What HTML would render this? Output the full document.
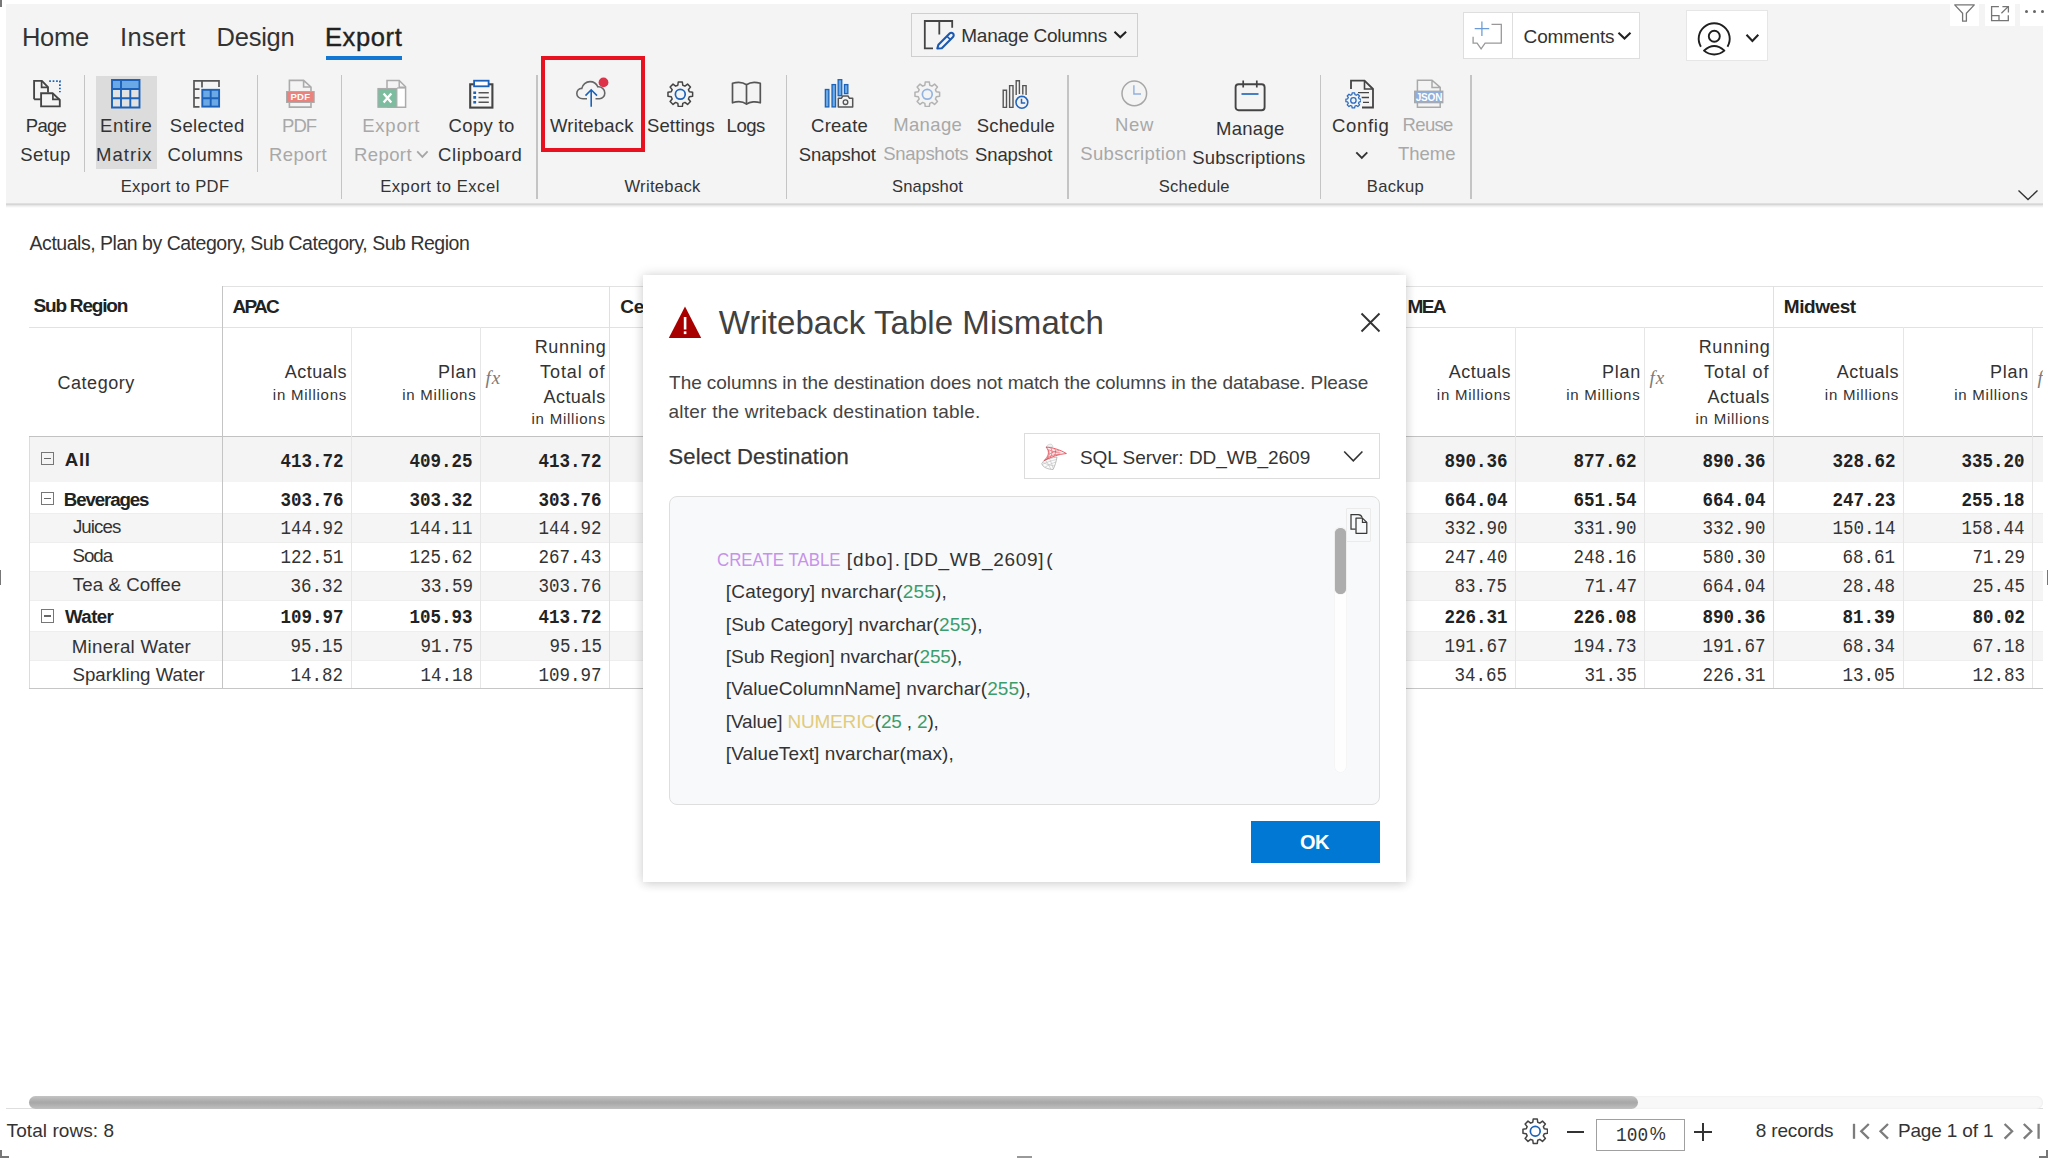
<!DOCTYPE html>
<html><head><meta charset="utf-8"><title>Writeback Table Mismatch</title>
<style>
html,body{margin:0;padding:0;background:#fff;}
body{width:2048px;height:1158px;position:relative;overflow:hidden;font-family:"Liberation Sans",sans-serif;}
.t{position:absolute;white-space:pre;}
.r{position:absolute;}
</style></head><body>
<div class="r" style="left:6.4px;top:4px;width:2036.6px;height:199.4px;background:#f4f4f4;"></div>
<div class="r" style="left:6.4px;top:203.2px;width:2036.6px;height:4.6px;background:linear-gradient(rgba(0,0,0,.07),rgba(0,0,0,.19) 22%,rgba(0,0,0,.08) 55%,rgba(0,0,0,0));"></div>
<div class="r" style="left:1949.8px;top:0px;width:29.5px;height:25.7px;background:#fff;"></div>
<div class="r" style="left:1984.8px;top:0px;width:29.8px;height:25.7px;background:#fff;"></div>
<div class="r" style="left:2019.6px;top:0px;width:28.4px;height:25.7px;background:#fff;"></div>
<div class="t" style="left:21.92px;top:25.13px;font-size:25.5px;line-height:25.5px;color:#333333;letter-spacing:-0.284px;">Home</div>
<div class="t" style="left:119.97px;top:25.13px;font-size:25.5px;line-height:25.5px;color:#333333;letter-spacing:0.340px;">Insert</div>
<div class="t" style="left:216.62px;top:25.13px;font-size:25.5px;line-height:25.5px;color:#333333;letter-spacing:-0.253px;">Design</div>
<div class="t" style="left:324.92px;top:25.13px;font-size:25.5px;line-height:25.5px;color:#222;letter-spacing:0.625px;-webkit-text-stroke:0.4px #222;">Export</div>
<div class="r" style="left:326px;top:56px;width:76px;height:4px;background:#1177d3;"></div>
<div class="r" style="left:83.7px;top:75px;width:1.4px;height:97px;background:#c4c4c4;"></div>
<div class="r" style="left:257.0px;top:75px;width:1.4px;height:97px;background:#c4c4c4;"></div>
<div class="r" style="left:340.90000000000003px;top:75px;width:1.4px;height:124px;background:#c4c4c4;"></div>
<div class="r" style="left:536.1999999999999px;top:75px;width:1.4px;height:124px;background:#c4c4c4;"></div>
<div class="r" style="left:785.9px;top:75px;width:1.4px;height:124px;background:#c4c4c4;"></div>
<div class="r" style="left:1067.3999999999999px;top:75px;width:1.4px;height:124px;background:#c4c4c4;"></div>
<div class="r" style="left:1319.6px;top:75px;width:1.4px;height:124px;background:#c4c4c4;"></div>
<div class="r" style="left:1470.3px;top:75px;width:1.4px;height:124px;background:#c4c4c4;"></div>
<div class="r" style="left:95.5px;top:75.5px;width:61.5px;height:93px;background:#dcdcdc;"></div>
<div class="t" style="left:25.79px;top:116.57px;font-size:18.5px;line-height:18.5px;color:#333333;letter-spacing:-0.728px;">Page</div>
<div class="t" style="left:20.23px;top:145.57px;font-size:18.5px;line-height:18.5px;color:#333333;letter-spacing:0.402px;">Setup</div>
<div class="t" style="left:100.09px;top:116.57px;font-size:18.5px;line-height:18.5px;color:#333333;letter-spacing:0.676px;">Entire</div>
<div class="t" style="left:96.09px;top:145.57px;font-size:18.5px;line-height:18.5px;color:#333333;letter-spacing:1.036px;">Matrix</div>
<div class="t" style="left:169.73px;top:116.57px;font-size:18.5px;line-height:18.5px;color:#333333;letter-spacing:0.355px;">Selected</div>
<div class="t" style="left:167.60px;top:145.57px;font-size:18.5px;line-height:18.5px;color:#333333;letter-spacing:0.345px;">Columns</div>
<div class="t" style="left:282.09px;top:116.57px;font-size:18.5px;line-height:18.5px;color:#a8a8a8;letter-spacing:-0.972px;">PDF</div>
<div class="t" style="left:269.09px;top:145.57px;font-size:18.5px;line-height:18.5px;color:#a8a8a8;letter-spacing:0.408px;">Report</div>
<div class="t" style="left:362.29px;top:116.57px;font-size:18.5px;line-height:18.5px;color:#a8a8a8;letter-spacing:0.739px;">Export</div>
<div class="t" style="left:354.09px;top:145.57px;font-size:18.5px;line-height:18.5px;color:#a8a8a8;letter-spacing:0.388px;">Report</div>
<div class="t" style="left:448.60px;top:116.57px;font-size:18.5px;line-height:18.5px;color:#333333;letter-spacing:0.337px;">Copy to</div>
<div class="t" style="left:438.10px;top:145.57px;font-size:18.5px;line-height:18.5px;color:#333333;letter-spacing:0.577px;">Clipboard</div>
<div class="t" style="left:550.00px;top:116.57px;font-size:18.5px;line-height:18.5px;color:#333333;letter-spacing:0.188px;">Writeback</div>
<div class="t" style="left:647.03px;top:116.57px;font-size:18.5px;line-height:18.5px;color:#333333;letter-spacing:0.115px;">Settings</div>
<div class="t" style="left:726.59px;top:116.57px;font-size:18.5px;line-height:18.5px;color:#333333;letter-spacing:-0.443px;">Logs</div>
<div class="t" style="left:811.10px;top:117.07px;font-size:18.5px;line-height:18.5px;color:#333333;letter-spacing:0.234px;">Create</div>
<div class="t" style="left:798.83px;top:146.07px;font-size:18.5px;line-height:18.5px;color:#333333;letter-spacing:-0.163px;">Snapshot</div>
<div class="t" style="left:893.19px;top:116.07px;font-size:18.5px;line-height:18.5px;color:#a8a8a8;letter-spacing:0.356px;">Manage</div>
<div class="t" style="left:883.23px;top:145.07px;font-size:18.5px;line-height:18.5px;color:#a8a8a8;letter-spacing:-0.260px;">Snapshots</div>
<div class="t" style="left:976.83px;top:117.07px;font-size:18.5px;line-height:18.5px;color:#333333;letter-spacing:0.123px;">Schedule</div>
<div class="t" style="left:975.03px;top:146.07px;font-size:18.5px;line-height:18.5px;color:#333333;letter-spacing:-0.120px;">Snapshot</div>
<div class="t" style="left:1114.99px;top:116.28px;font-size:18.5px;line-height:18.5px;color:#a8a8a8;letter-spacing:0.642px;">New</div>
<div class="t" style="left:1080.23px;top:145.38px;font-size:18.5px;line-height:18.5px;color:#a8a8a8;letter-spacing:0.380px;">Subscription</div>
<div class="t" style="left:1216.09px;top:119.57px;font-size:18.5px;line-height:18.5px;color:#333333;letter-spacing:0.256px;">Manage</div>
<div class="t" style="left:1192.23px;top:148.57px;font-size:18.5px;line-height:18.5px;color:#333333;letter-spacing:0.159px;">Subscriptions</div>
<div class="t" style="left:1332.10px;top:116.88px;font-size:18.5px;line-height:18.5px;color:#333333;letter-spacing:0.622px;">Config</div>
<div class="t" style="left:1402.59px;top:116.38px;font-size:18.5px;line-height:18.5px;color:#a8a8a8;letter-spacing:-0.665px;">Reuse</div>
<div class="t" style="left:1398.01px;top:145.38px;font-size:18.5px;line-height:18.5px;color:#a8a8a8;letter-spacing:-0.025px;">Theme</div>
<div class="t" style="left:120.66px;top:178.69px;font-size:16.6px;line-height:16.6px;color:#333333;letter-spacing:0.351px;">Export to PDF</div>
<div class="t" style="left:380.16px;top:178.69px;font-size:16.6px;line-height:16.6px;color:#333333;letter-spacing:0.547px;">Export to Excel</div>
<div class="t" style="left:624.40px;top:178.69px;font-size:16.6px;line-height:16.6px;color:#333333;letter-spacing:0.312px;">Writeback</div>
<div class="t" style="left:892.07px;top:178.69px;font-size:16.6px;line-height:16.6px;color:#333333;letter-spacing:0.096px;">Snapshot</div>
<div class="t" style="left:1158.77px;top:178.69px;font-size:16.6px;line-height:16.6px;color:#333333;letter-spacing:0.234px;">Schedule</div>
<div class="t" style="left:1366.86px;top:178.69px;font-size:16.6px;line-height:16.6px;color:#333333;letter-spacing:0.292px;">Backup</div>
<div class="r" style="left:541px;top:56px;width:103.5px;height:96px;border:4px solid #e8111f;box-sizing:border-box;"></div>
<svg class="r" style="left:32px;top:78px;" width="31" height="31" viewBox="0 0 31 31" fill="none"><path d="M2.1 21.3 V2.9 H9.9 L16 9.2 V14.5" stroke="#444" stroke-width="1.85"/><path d="M2.1 21.3 H8.6" stroke="#444" stroke-width="1.85"/><path d="M9.6 2.9 V9.4 H16" stroke="#444" stroke-width="1.7"/>
<path d="M9.1 15.2 H20.6 L27.8 22 V28.3 H9.1 Z" stroke="#444" stroke-width="1.85" fill="#f4f4f4"/><path d="M20.9 15.2 V21.3 H27.8" stroke="#444" stroke-width="1.7"/>
<path d="M17.2 3.1 H27.9 V14.2" stroke="#1b62b8" stroke-width="1.8" stroke-dasharray="1.7 1.75"/></svg>
<svg class="r" style="left:110px;top:78px;" width="32" height="32" viewBox="0 0 32 32" fill="none"><rect x="2" y="2" width="27.5" height="27.5" fill="#e2e2e2"/><rect x="2" y="2" width="27.5" height="9" fill="#6aa9e6"/>
<path d="M2 2 H29.5 V29.5 H2 Z M2 11 H29.5 M2 20.2 H29.5 M11 2 V29.5 M20.3 11 V29.5" stroke="#1b62b8" stroke-width="1.9"/></svg>
<svg class="r" style="left:191px;top:78px;" width="31" height="31" viewBox="0 0 31 31" fill="none"><path d="M28 9 V2.8 H3 V28.8 H8.5 M3 11.1 H8.5 M3 19.9 H8.5 M11 2.8 V9.5" stroke="#555" stroke-width="1.7"/>
<rect x="11.3" y="11.8" width="16.8" height="16.8" fill="#6aa9e6" stroke="#1b62b8" stroke-width="1.9"/><path d="M19.7 11.8 V28.6 M11.3 20.2 H28.1" stroke="#1b62b8" stroke-width="1.9"/></svg>
<svg class="r" style="left:285px;top:78px;" width="31" height="31" viewBox="0 0 31 31" fill="none"><path d="M4.4 13 V2.4 H18.6 L26 9 V13 M4.4 24.5 V29.1 H26 V24.5 M18.6 2.4 V9 H26" stroke="#ababab" stroke-width="1.6"/>
<rect x="1.5" y="13.5" width="27.7" height="11" fill="#e8837d" stroke="#ababab" stroke-width="1"/></svg>
<div class="t" style="left:290.56px;top:92.42px;font-size:9.5px;line-height:9.5px;color:#fff;font-weight:700;letter-spacing:0.225px;">PDF</div>
<svg class="r" style="left:376px;top:78px;" width="32" height="31" viewBox="0 0 32 31" fill="none"><rect x="21" y="10" width="8.5" height="19" fill="#fff"/><path d="M11 10 V2.4 H23.2 L29.6 8.8 V29.2 H11" stroke="#ababab" stroke-width="1.5"/><path d="M23.2 2.4 V9.2 H29.6" stroke="#ababab" stroke-width="1.4"/><path d="M21 10 H29.6" stroke="#ababab" stroke-width="1.2"/>
<rect x="1.9" y="10.5" width="19" height="18.8" fill="#7dbd9f" stroke="#ababab" stroke-width="1.1"/><path d="M7.6 15.5 L15.3 24.6 M15.3 15.5 L7.6 24.6" stroke="#fff" stroke-width="2.3"/></svg>
<svg class="r" style="left:467px;top:77.5px;" width="29" height="32" viewBox="0 0 29 32" fill="none"><rect x="3.2" y="6.3" width="22.2" height="23.3" stroke="#444" stroke-width="2.1" fill="#f7f7f7"/>
<rect x="7.1" y="2.7" width="14.5" height="5.6" stroke="#1b62b8" stroke-width="1.8" fill="#fff"/>
<path d="M11.5 14.7 H21.8 M11.5 19.4 H21.8 M11.5 24.2 H21.8" stroke="#555" stroke-width="1.5"/>
<path d="M6.3 14.7 H9.1 M6.3 19.4 H9.1 M6.3 24.2 H9.1" stroke="#1b62b8" stroke-width="2.6"/></svg>
<svg class="r" style="left:575px;top:76px;" width="34" height="32" viewBox="0 0 34 32" fill="none"><path d="M12 22.8 H8 C4.2 22.8 1.8 20.4 1.8 17.4 C1.8 14.6 4 12.3 6.8 12.4 C7.5 8.5 11 5.6 15 5.6 C18.5 5.6 21.5 7.6 22.8 10.8 C26.5 10.5 29.8 13 29.8 16.9 C29.8 20.2 27.5 22.8 24.5 22.8 H20.5" stroke="#666" stroke-width="1.6"/>
<path d="M16.2 30.7 V14 M10.5 19.6 L16.2 13.8 L22 19.6" stroke="#1b62b8" stroke-width="1.6"/>
<circle cx="28.5" cy="6.4" r="4.9" fill="#dd3349"/></svg>
<svg class="r" style="left:667px;top:80.5px;" width="26.6" height="26.6" viewBox="0 0 26.6 26.6" fill="none"><path d="M10.83 4.27 L11.25 0.97 L15.35 0.97 L15.77 4.27 L17.94 5.17 L20.57 3.13 L23.47 6.03 L21.43 8.66 L22.33 10.83 L25.63 11.25 L25.63 15.35 L22.33 15.77 L21.43 17.94 L23.47 20.57 L20.57 23.47 L17.94 21.43 L15.77 22.33 L15.35 25.63 L11.25 25.63 L10.83 22.33 L8.66 21.43 L6.03 23.47 L3.13 20.57 L5.17 17.94 L4.27 15.77 L0.97 15.35 L0.97 11.25 L4.27 10.83 L5.17 8.66 L3.13 6.03 L6.03 3.13 L8.66 5.17 Z" stroke="#444" stroke-width="1.5" stroke-linejoin="round"/><circle cx="13.3" cy="13.3" r="4.92" stroke="#1b62b8" stroke-width="1.7"/></svg>
<svg class="r" style="left:730px;top:80px;" width="33" height="27" viewBox="0 0 33 27" fill="none"><path d="M16.5 4.7 C13 2.2 7 2 2.5 3.3 V22.8 C7 21.3 13 21.5 16.5 24.2 C20 21.5 26 21.3 30.3 22.8 V3.3 C26 2 20 2.2 16.5 4.7 Z M16.5 4.7 V24.2" stroke="#555" stroke-width="1.7" stroke-linejoin="round"/></svg>
<svg class="r" style="left:822.8px;top:77px;" width="32" height="32" viewBox="0 0 32 32" fill="none"><rect x="2.35" y="12.5" width="3.5" height="17.4" fill="#6aa9e6" stroke="#1b62b8" stroke-width="1.3"/>
<rect x="9.05" y="7.6" width="3.5" height="22.3" fill="#6aa9e6" stroke="#1b62b8" stroke-width="1.3"/>
<rect x="15.15" y="2.7" width="3.6" height="16" fill="#6aa9e6" stroke="#1b62b8" stroke-width="1.3"/>
<rect x="21.45" y="7.6" width="3.4" height="9" fill="#6aa9e6" stroke="#1b62b8" stroke-width="1.3"/>
<path d="M15.3 21.3 H18.3 L19.8 19 H25 L26.5 21.3 H29.7 V29.9 H15.3 Z" fill="#f4f4f4" stroke="#555" stroke-width="1.5" stroke-linejoin="round"/><circle cx="22.5" cy="25.2" r="2.3" stroke="#555" stroke-width="1.4"/></svg>
<svg class="r" style="left:914px;top:80.5px;" width="26.6" height="26.6" viewBox="0 0 26.6 26.6" fill="none"><path d="M10.83 4.27 L11.25 0.97 L15.35 0.97 L15.77 4.27 L17.94 5.17 L20.57 3.13 L23.47 6.03 L21.43 8.66 L22.33 10.83 L25.63 11.25 L25.63 15.35 L22.33 15.77 L21.43 17.94 L23.47 20.57 L20.57 23.47 L17.94 21.43 L15.77 22.33 L15.35 25.63 L11.25 25.63 L10.83 22.33 L8.66 21.43 L6.03 23.47 L3.13 20.57 L5.17 17.94 L4.27 15.77 L0.97 15.35 L0.97 11.25 L4.27 10.83 L5.17 8.66 L3.13 6.03 L6.03 3.13 L8.66 5.17 Z" stroke="#b3b3b3" stroke-width="1.5" stroke-linejoin="round"/><circle cx="13.3" cy="13.3" r="4.92" stroke="#94b4e0" stroke-width="1.7"/></svg>
<svg class="r" style="left:1000px;top:77.5px;" width="31" height="32" viewBox="0 0 31 32" fill="none"><path d="M3.2 29.4 V12.3 H6.5 V29.4 Z M9.6 29.4 V7.6 H13 V29.4 Z M16.2 17 V2.7 H19.4 V16 M22.8 16.5 V7.6 H26.1 V17" stroke="#555" stroke-width="1.4"/>
<circle cx="21.9" cy="24.3" r="5.9" fill="#f4f4f4" stroke="#2266bd" stroke-width="1.6"/><path d="M21.5 20.8 V24.9 H25.2" stroke="#2266bd" stroke-width="1.5"/></svg>
<svg class="r" style="left:1120px;top:79px;" width="29" height="29" viewBox="0 0 29 29" fill="none"><circle cx="14.3" cy="14.4" r="12.3" stroke="#a6a6a6" stroke-width="1.5"/><path d="M13.9 6.3 V15 H21" stroke="#8fb0de" stroke-width="1.4"/></svg>
<svg class="r" style="left:1233px;top:79px;" width="35" height="34" viewBox="0 0 35 34" fill="none"><rect x="2.6" y="5.2" width="29" height="26" rx="3" stroke="#444" stroke-width="1.9"/><path d="M10.2 1.5 V8.5 M23.8 1.5 V8.5" stroke="#444" stroke-width="1.7"/><path d="M8.5 15 H25.5" stroke="#1b62b8" stroke-width="1.6"/></svg>
<svg class="r" style="left:1343px;top:78px;" width="33" height="32" viewBox="0 0 33 32" fill="none"><path d="M8 11 V2.7 H21.5 L30 11 V29.5 H19" stroke="#444" stroke-width="1.8"/><path d="M21.5 2.7 V11 H30" stroke="#444" stroke-width="1.6"/>
<path d="M15 14.6 H26 M18.5 19.5 H26 M20 24.4 H26" stroke="#444" stroke-width="1.4"/></svg>
<div class="r" style="left:1345.2px;top:92.2px;width:16.6px;height:16.6px;background:#f4f4f4;border-radius:50%;"></div>
<svg class="r" style="left:1344.7px;top:92px;" width="16.8" height="16.8" viewBox="0 0 16.8 16.8" fill="none"><path d="M6.84 2.70 L7.15 0.90 L9.65 0.90 L9.96 2.70 L11.33 3.27 L12.82 2.22 L14.58 3.98 L13.53 5.47 L14.10 6.84 L15.90 7.15 L15.90 9.65 L14.10 9.96 L13.53 11.33 L14.58 12.82 L12.82 14.58 L11.33 13.53 L9.96 14.10 L9.65 15.90 L7.15 15.90 L6.84 14.10 L5.47 13.53 L3.98 14.58 L2.22 12.82 L3.27 11.33 L2.70 9.96 L0.90 9.65 L0.90 7.15 L2.70 6.84 L3.27 5.47 L2.22 3.98 L3.98 2.22 L5.47 3.27 Z" stroke="#2b6cc0" stroke-width="1.25" stroke-linejoin="round"/><circle cx="8.4" cy="8.4" r="2.69" stroke="#2b6cc0" stroke-width="1.3"/></svg>
<svg class="r" style="left:1413px;top:78px;" width="31" height="31" viewBox="0 0 31 31" fill="none"><path d="M4.4 13 V2.2 H19 L27.2 9.4 V13 M4.4 24.5 V29.3 H27.2 V24.5 M19 2.2 V9.4 H27.2" stroke="#a9a9a9" stroke-width="1.5"/>
<rect x="1.6" y="13.1" width="28.3" height="11.7" fill="#8faedb" stroke="#a4a4a4" stroke-width="1"/></svg>
<div class="t" style="left:1415.67px;top:93.30px;font-size:10px;line-height:10px;color:#fff;font-weight:700;letter-spacing:-0.167px;">JSON</div>
<svg class="r" style="left:415.7px;top:149.5px;" width="13" height="9" viewBox="0 0 13 9" fill="none"><path d="M1.2 1.4 L6.4 6.9 L11.6 1.4" stroke="#a6a6a6" stroke-width="1.8"/></svg>
<svg class="r" style="left:1355px;top:150.5px;" width="14" height="9" viewBox="0 0 14 9" fill="none"><path d="M1.3 1.3 L6.8 6.9 L12.3 1.3" stroke="#333" stroke-width="1.9"/></svg>
<svg class="r" style="left:2017px;top:188.5px;" width="22" height="13" viewBox="0 0 22 13" fill="none"><path d="M1.5 1.5 L11 10.6 L20.5 1.5" stroke="#333" stroke-width="1.4"/></svg>
<div class="r" style="left:911px;top:13px;width:226.5px;height:43.5px;border:1px solid #cfcfcf;box-sizing:border-box;"></div>
<div class="t" style="left:961.20px;top:26.15px;font-size:19px;line-height:19px;color:#333333;letter-spacing:-0.227px;">Manage Columns</div>
<div class="r" style="left:1462.5px;top:12px;width:177px;height:46.5px;background:#fff;border:1px solid #dedede;box-sizing:border-box;"></div>
<div class="r" style="left:1511.5px;top:12px;width:1px;height:46.5px;background:#dedede;"></div>
<div class="t" style="left:1523.53px;top:27.15px;font-size:19px;line-height:19px;color:#333333;letter-spacing:-0.111px;">Comments</div>
<div class="r" style="left:1685.5px;top:10.3px;width:82px;height:50.3px;background:#fff;border:1px solid #e6e6e6;box-sizing:border-box;"></div>
<svg class="r" style="left:922px;top:18px;" width="34" height="33" viewBox="0 0 34 33" fill="none"><path d="M11 30.3 H2.8 V3 H30.2 V9.8 M17.3 3 V16.5" stroke="#444" stroke-width="1.8"/>
<path d="M27.6 15.6 a2.4 2.4 0 0 1 3.4 3.4 L19.8 30.2 L15.3 30.5 L16.4 26.8 Z" stroke="#1b59b0" stroke-width="2.1" stroke-linejoin="round"/><path d="M25 18.2 L28.4 21.6" stroke="#1b59b0" stroke-width="1.6"/></svg>
<svg class="r" style="left:1112.7px;top:29.5px;" width="15" height="10" viewBox="0 0 15 10" fill="none"><path d="M1.5 1.7 L7.3 7.3 L13.1 1.7" stroke="#222" stroke-width="2.1"/></svg>
<svg class="r" style="left:1470.5px;top:19.5px;" width="33" height="31" viewBox="0 0 33 31" fill="none"><path d="M20.5 4.3 H30.3 V23.2 H14.1 L10.1 28.8 L6.1 23.2 H2.1 V16.8" stroke="#999" stroke-width="1.3"/>
<path d="M10.9 1.5 V15.9 M3.7 8.7 H18.2" stroke="#6a9ad8" stroke-width="1.25"/></svg>
<svg class="r" style="left:1617px;top:31.3px;" width="15" height="10" viewBox="0 0 15 10" fill="none"><path d="M1.5 1.7 L7.5 7.6 L13.5 1.7" stroke="#222" stroke-width="2.1"/></svg>
<svg class="r" style="left:1696px;top:21px;" width="36" height="36" viewBox="0 0 36 36" fill="none"><path d="M4.9 25.7 A15.5 15.5 0 1 1 31.5 25.7" stroke="#1f1f1f" stroke-width="1.9"/><circle cx="18.3" cy="15.3" r="5.5" stroke="#1f1f1f" stroke-width="1.9"/>
<path d="M8 29.6 Q18.2 20.2 28.4 29.6 A15.5 15.5 0 0 1 8 29.6 Z" stroke="#1f1f1f" stroke-width="1.9" stroke-linejoin="round"/></svg>
<svg class="r" style="left:1745px;top:33.2px;" width="15" height="11" viewBox="0 0 15 11" fill="none"><path d="M1.5 1.7 L7.4 7.9 L13.3 1.7" stroke="#222" stroke-width="2.1"/></svg>
<svg class="r" style="left:1953px;top:3px;" width="24" height="20" viewBox="0 0 24 20" fill="none"><path d="M1.7 1.9 H21.3 L13.4 10.2 V18.2 H9.6 V10.2 Z" stroke="#757575" stroke-width="1.3" stroke-linejoin="round"/></svg>
<svg class="r" style="left:1989.5px;top:5px;" width="21" height="17" viewBox="0 0 21 17" fill="none"><path d="M8.9 1.6 H1.6 V15.6 H18.3 V10.3 M1.6 10.7 H9 V15.6" stroke="#757575" stroke-width="1.3"/><path d="M11.4 8.2 L18.2 1.6 M12.4 1.6 H18.4 V7.6" stroke="#757575" stroke-width="1.3"/></svg>
<div class="r" style="left:2025.2px;top:10.3px;width:3.2px;height:3.2px;background:#666;border-radius:50%;"></div>
<div class="r" style="left:2032.8000000000002px;top:10.3px;width:3.2px;height:3.2px;background:#666;border-radius:50%;"></div>
<div class="r" style="left:2040.7px;top:10.3px;width:3.2px;height:3.2px;background:#666;border-radius:50%;"></div>
<div class="t" style="left:29.60px;top:233.53px;font-size:19.5px;line-height:19.5px;color:#333333;letter-spacing:-0.482px;">Actuals, Plan by Category, Sub Category, Sub Region</div>
<div class="r" style="left:0;top:280px;width:2042.5px;height:420px;overflow:hidden;">
<div class="r" style="left:29px;top:157px;width:2020px;height:45px;background:#f4f4f4;"></div>
<div class="r" style="left:29px;top:233px;width:2020px;height:29px;background:#f5f5f5;"></div>
<div class="r" style="left:29px;top:291px;width:2020px;height:29.5px;background:#f5f5f5;"></div>
<div class="r" style="left:29px;top:351px;width:2020px;height:29px;background:#f5f5f5;"></div>
<div class="r" style="left:29px;top:232.5px;width:2020px;height:1px;background:#eeeeee;"></div>
<div class="r" style="left:29px;top:261.5px;width:2020px;height:1px;background:#eeeeee;"></div>
<div class="r" style="left:29px;top:290.5px;width:2020px;height:1px;background:#eeeeee;"></div>
<div class="r" style="left:29px;top:320.0px;width:2020px;height:1px;background:#eeeeee;"></div>
<div class="r" style="left:29px;top:350.5px;width:2020px;height:1px;background:#eeeeee;"></div>
<div class="r" style="left:29px;top:379.5px;width:2020px;height:1px;background:#eeeeee;"></div>
<div class="r" style="left:222px;top:6px;width:1830px;height:1px;background:#e2e2e2;"></div>
<div class="r" style="left:29px;top:46.5px;width:2020px;height:1px;background:#e2e2e2;"></div>
<div class="r" style="left:29px;top:156px;width:2020px;height:1px;background:#c2c2c2;"></div>
<div class="r" style="left:29px;top:408px;width:2020px;height:1px;background:#c6c6c6;"></div>
<div class="r" style="left:29px;top:157px;width:1px;height:251px;background:#dcdcdc;"></div>
<div class="r" style="left:221.5px;top:6px;width:1.5px;height:402px;background:#c4c4c4;"></div>
<div class="r" style="left:350.53299999999996px;top:47px;width:1px;height:361px;background:#e6e6e6;"></div>
<div class="r" style="left:479.866px;top:47px;width:1px;height:361px;background:#e6e6e6;"></div>
<div class="r" style="left:609.1990000000001px;top:6px;width:1px;height:402px;background:#e0e0e0;"></div>
<div class="r" style="left:738.532px;top:47px;width:1px;height:361px;background:#e6e6e6;"></div>
<div class="r" style="left:867.865px;top:47px;width:1px;height:361px;background:#e6e6e6;"></div>
<div class="r" style="left:997.1980000000001px;top:6px;width:1px;height:402px;background:#e0e0e0;"></div>
<div class="r" style="left:1126.5310000000002px;top:47px;width:1px;height:361px;background:#e6e6e6;"></div>
<div class="r" style="left:1255.864px;top:47px;width:1px;height:361px;background:#e6e6e6;"></div>
<div class="r" style="left:1385.1970000000001px;top:6px;width:1px;height:402px;background:#e0e0e0;"></div>
<div class="r" style="left:1514.53px;top:47px;width:1px;height:361px;background:#e6e6e6;"></div>
<div class="r" style="left:1643.863px;top:47px;width:1px;height:361px;background:#e6e6e6;"></div>
<div class="r" style="left:1773.1960000000001px;top:6px;width:1px;height:402px;background:#e0e0e0;"></div>
<div class="r" style="left:1902.529px;top:47px;width:1px;height:361px;background:#e6e6e6;"></div>
<div class="r" style="left:2031.862px;top:47px;width:1px;height:361px;background:#e6e6e6;"></div>
<div class="r" style="left:2161.1949999999997px;top:6px;width:1px;height:402px;background:#e0e0e0;"></div>
<div class="t" style="left:33.50px;top:16.15px;font-size:19px;line-height:19px;color:#222;font-weight:700;letter-spacing:-1.200px;">Sub Region</div>
<div class="t" style="left:57.42px;top:94.30px;font-size:18px;line-height:18px;color:#333333;letter-spacing:0.554px;">Category</div>
<div class="t" style="left:232.62px;top:17.35px;font-size:19px;line-height:19px;color:#222;font-weight:700;letter-spacing:-1.775px;">APAC</div>
<div class="t" style="left:284.83px;top:82.60px;font-size:18px;line-height:18px;color:#333333;letter-spacing:0.438px;">Actuals</div>
<div class="t" style="left:272.83px;top:106.85px;font-size:15px;line-height:15px;color:#333333;letter-spacing:0.762px;">in Millions</div>
<div class="t" style="left:438.09px;top:82.60px;font-size:18px;line-height:18px;color:#333333;letter-spacing:0.733px;">Plan</div>
<div class="t" style="left:402.17px;top:106.85px;font-size:15px;line-height:15px;color:#333333;letter-spacing:0.762px;">in Millions</div>
<div class="t" style="left:534.72px;top:58.30px;font-size:18px;line-height:18px;color:#333333;letter-spacing:0.650px;">Running</div>
<div class="t" style="left:540.12px;top:82.80px;font-size:18px;line-height:18px;color:#333333;letter-spacing:0.893px;">Total of</div>
<div class="t" style="left:543.50px;top:107.60px;font-size:18px;line-height:18px;color:#333333;letter-spacing:0.438px;">Actuals</div>
<div class="t" style="left:531.50px;top:131.45px;font-size:15px;line-height:15px;color:#333333;letter-spacing:0.762px;">in Millions</div>
<div class="t" style="left:485.54px;top:88.13px;font-size:19px;line-height:19px;color:#7a7a7a;font-style:italic;font-family:'Liberation Serif', serif;letter-spacing:1px;">fx</div>
<div class="t" style="left:620.25px;top:17.35px;font-size:19px;line-height:19px;color:#222;font-weight:700;letter-spacing:-0.229px;">Central</div>
<div class="t" style="left:672.83px;top:82.60px;font-size:18px;line-height:18px;color:#333333;letter-spacing:0.438px;">Actuals</div>
<div class="t" style="left:660.83px;top:106.85px;font-size:15px;line-height:15px;color:#333333;letter-spacing:0.762px;">in Millions</div>
<div class="t" style="left:826.09px;top:82.60px;font-size:18px;line-height:18px;color:#333333;letter-spacing:0.733px;">Plan</div>
<div class="t" style="left:790.16px;top:106.85px;font-size:15px;line-height:15px;color:#333333;letter-spacing:0.762px;">in Millions</div>
<div class="t" style="left:922.72px;top:58.30px;font-size:18px;line-height:18px;color:#333333;letter-spacing:0.650px;">Running</div>
<div class="t" style="left:928.12px;top:82.80px;font-size:18px;line-height:18px;color:#333333;letter-spacing:0.893px;">Total of</div>
<div class="t" style="left:931.50px;top:107.60px;font-size:18px;line-height:18px;color:#333333;letter-spacing:0.438px;">Actuals</div>
<div class="t" style="left:919.50px;top:131.45px;font-size:15px;line-height:15px;color:#333333;letter-spacing:0.762px;">in Millions</div>
<div class="t" style="left:873.54px;top:88.13px;font-size:19px;line-height:19px;color:#7a7a7a;font-style:italic;font-family:'Liberation Serif', serif;letter-spacing:1px;">fx</div>
<div class="t" style="left:1007.75px;top:17.35px;font-size:19px;line-height:19px;color:#222;font-weight:700;letter-spacing:-0.875px;">East</div>
<div class="t" style="left:1060.83px;top:82.60px;font-size:18px;line-height:18px;color:#333333;letter-spacing:0.438px;">Actuals</div>
<div class="t" style="left:1048.83px;top:106.85px;font-size:15px;line-height:15px;color:#333333;letter-spacing:0.762px;">in Millions</div>
<div class="t" style="left:1214.09px;top:82.60px;font-size:18px;line-height:18px;color:#333333;letter-spacing:0.733px;">Plan</div>
<div class="t" style="left:1178.16px;top:106.85px;font-size:15px;line-height:15px;color:#333333;letter-spacing:0.762px;">in Millions</div>
<div class="t" style="left:1310.72px;top:58.30px;font-size:18px;line-height:18px;color:#333333;letter-spacing:0.650px;">Running</div>
<div class="t" style="left:1316.12px;top:82.80px;font-size:18px;line-height:18px;color:#333333;letter-spacing:0.893px;">Total of</div>
<div class="t" style="left:1319.50px;top:107.60px;font-size:18px;line-height:18px;color:#333333;letter-spacing:0.438px;">Actuals</div>
<div class="t" style="left:1307.50px;top:131.45px;font-size:15px;line-height:15px;color:#333333;letter-spacing:0.762px;">in Millions</div>
<div class="t" style="left:1261.54px;top:88.13px;font-size:19px;line-height:19px;color:#7a7a7a;font-style:italic;font-family:'Liberation Serif', serif;letter-spacing:1px;">fx</div>
<div class="t" style="left:1407.45px;top:17.35px;font-size:19px;line-height:19px;color:#222;font-weight:700;letter-spacing:-1.600px;">MEA</div>
<div class="t" style="left:1448.83px;top:82.60px;font-size:18px;line-height:18px;color:#333333;letter-spacing:0.438px;">Actuals</div>
<div class="t" style="left:1436.83px;top:106.85px;font-size:15px;line-height:15px;color:#333333;letter-spacing:0.762px;">in Millions</div>
<div class="t" style="left:1602.09px;top:82.60px;font-size:18px;line-height:18px;color:#333333;letter-spacing:0.733px;">Plan</div>
<div class="t" style="left:1566.16px;top:106.85px;font-size:15px;line-height:15px;color:#333333;letter-spacing:0.762px;">in Millions</div>
<div class="t" style="left:1698.72px;top:58.30px;font-size:18px;line-height:18px;color:#333333;letter-spacing:0.650px;">Running</div>
<div class="t" style="left:1704.12px;top:82.80px;font-size:18px;line-height:18px;color:#333333;letter-spacing:0.893px;">Total of</div>
<div class="t" style="left:1707.50px;top:107.60px;font-size:18px;line-height:18px;color:#333333;letter-spacing:0.438px;">Actuals</div>
<div class="t" style="left:1695.50px;top:131.45px;font-size:15px;line-height:15px;color:#333333;letter-spacing:0.762px;">in Millions</div>
<div class="t" style="left:1649.54px;top:88.13px;font-size:19px;line-height:19px;color:#7a7a7a;font-style:italic;font-family:'Liberation Serif', serif;letter-spacing:1px;">fx</div>
<div class="t" style="left:1783.75px;top:17.35px;font-size:19px;line-height:19px;color:#222;font-weight:700;letter-spacing:-0.417px;">Midwest</div>
<div class="t" style="left:1836.83px;top:82.60px;font-size:18px;line-height:18px;color:#333333;letter-spacing:0.438px;">Actuals</div>
<div class="t" style="left:1824.83px;top:106.85px;font-size:15px;line-height:15px;color:#333333;letter-spacing:0.762px;">in Millions</div>
<div class="t" style="left:1990.09px;top:82.60px;font-size:18px;line-height:18px;color:#333333;letter-spacing:0.733px;">Plan</div>
<div class="t" style="left:1954.16px;top:106.85px;font-size:15px;line-height:15px;color:#333333;letter-spacing:0.762px;">in Millions</div>
<div class="t" style="left:2086.72px;top:58.30px;font-size:18px;line-height:18px;color:#333333;letter-spacing:0.650px;">Running</div>
<div class="t" style="left:2092.12px;top:82.80px;font-size:18px;line-height:18px;color:#333333;letter-spacing:0.893px;">Total of</div>
<div class="t" style="left:2095.49px;top:107.60px;font-size:18px;line-height:18px;color:#333333;letter-spacing:0.438px;">Actuals</div>
<div class="t" style="left:2083.49px;top:131.45px;font-size:15px;line-height:15px;color:#333333;letter-spacing:0.762px;">in Millions</div>
<div class="t" style="left:2037.54px;top:88.13px;font-size:19px;line-height:19px;color:#7a7a7a;font-style:italic;font-family:'Liberation Serif', serif;letter-spacing:1px;">fx</div>
<div class="r" style="left:40.5px;top:171.9px;width:13.3px;height:13.3px;border:1px solid #777;box-sizing:border-box;"></div>
<div class="r" style="left:44px;top:178.0px;width:6.5px;height:1.2px;background:#666;"></div>
<div class="t" style="left:64.63px;top:170.60px;font-size:18.7px;line-height:18.7px;color:#222;font-weight:700;letter-spacing:0.766px;">All</div>
<div class="t" style="left:267.82px;top:170.75px;font-size:21px;line-height:21px;color:#222;font-weight:700;font-family:'Liberation Mono', monospace;transform:scaleX(.835);transform-origin:100% 50%;">413.72</div>
<div class="t" style="left:397.16px;top:170.75px;font-size:21px;line-height:21px;color:#222;font-weight:700;font-family:'Liberation Mono', monospace;transform:scaleX(.835);transform-origin:100% 50%;">409.25</div>
<div class="t" style="left:526.49px;top:170.75px;font-size:21px;line-height:21px;color:#222;font-weight:700;font-family:'Liberation Mono', monospace;transform:scaleX(.835);transform-origin:100% 50%;">413.72</div>
<div class="t" style="left:655.82px;top:170.75px;font-size:21px;line-height:21px;color:#222;font-weight:700;font-family:'Liberation Mono', monospace;transform:scaleX(.835);transform-origin:100% 50%;">512.40</div>
<div class="t" style="left:785.16px;top:170.75px;font-size:21px;line-height:21px;color:#222;font-weight:700;font-family:'Liberation Mono', monospace;transform:scaleX(.835);transform-origin:100% 50%;">508.11</div>
<div class="t" style="left:914.49px;top:170.75px;font-size:21px;line-height:21px;color:#222;font-weight:700;font-family:'Liberation Mono', monospace;transform:scaleX(.835);transform-origin:100% 50%;">512.40</div>
<div class="t" style="left:1043.82px;top:170.75px;font-size:21px;line-height:21px;color:#222;font-weight:700;font-family:'Liberation Mono', monospace;transform:scaleX(.835);transform-origin:100% 50%;">298.10</div>
<div class="t" style="left:1173.15px;top:170.75px;font-size:21px;line-height:21px;color:#222;font-weight:700;font-family:'Liberation Mono', monospace;transform:scaleX(.835);transform-origin:100% 50%;">301.45</div>
<div class="t" style="left:1302.49px;top:170.75px;font-size:21px;line-height:21px;color:#222;font-weight:700;font-family:'Liberation Mono', monospace;transform:scaleX(.835);transform-origin:100% 50%;">298.10</div>
<div class="t" style="left:1431.82px;top:170.75px;font-size:21px;line-height:21px;color:#222;font-weight:700;font-family:'Liberation Mono', monospace;transform:scaleX(.835);transform-origin:100% 50%;">890.36</div>
<div class="t" style="left:1561.15px;top:170.75px;font-size:21px;line-height:21px;color:#222;font-weight:700;font-family:'Liberation Mono', monospace;transform:scaleX(.835);transform-origin:100% 50%;">877.62</div>
<div class="t" style="left:1690.49px;top:170.75px;font-size:21px;line-height:21px;color:#222;font-weight:700;font-family:'Liberation Mono', monospace;transform:scaleX(.835);transform-origin:100% 50%;">890.36</div>
<div class="t" style="left:1819.82px;top:170.75px;font-size:21px;line-height:21px;color:#222;font-weight:700;font-family:'Liberation Mono', monospace;transform:scaleX(.835);transform-origin:100% 50%;">328.62</div>
<div class="t" style="left:1949.15px;top:170.75px;font-size:21px;line-height:21px;color:#222;font-weight:700;font-family:'Liberation Mono', monospace;transform:scaleX(.835);transform-origin:100% 50%;">335.20</div>
<div class="t" style="left:2078.49px;top:170.75px;font-size:21px;line-height:21px;color:#222;font-weight:700;font-family:'Liberation Mono', monospace;transform:scaleX(.835);transform-origin:100% 50%;">328.62</div>
<div class="r" style="left:40.5px;top:212.1px;width:13.3px;height:13.3px;border:1px solid #777;box-sizing:border-box;"></div>
<div class="r" style="left:44px;top:218.2px;width:6.5px;height:1.2px;background:#666;"></div>
<div class="t" style="left:63.77px;top:210.80px;font-size:18.7px;line-height:18.7px;color:#222;font-weight:700;letter-spacing:-1.117px;">Beverages</div>
<div class="t" style="left:267.82px;top:210.25px;font-size:21px;line-height:21px;color:#222;font-weight:700;font-family:'Liberation Mono', monospace;transform:scaleX(.835);transform-origin:100% 50%;">303.76</div>
<div class="t" style="left:397.16px;top:210.25px;font-size:21px;line-height:21px;color:#222;font-weight:700;font-family:'Liberation Mono', monospace;transform:scaleX(.835);transform-origin:100% 50%;">303.32</div>
<div class="t" style="left:526.49px;top:210.25px;font-size:21px;line-height:21px;color:#222;font-weight:700;font-family:'Liberation Mono', monospace;transform:scaleX(.835);transform-origin:100% 50%;">303.76</div>
<div class="t" style="left:655.82px;top:210.25px;font-size:21px;line-height:21px;color:#222;font-weight:700;font-family:'Liberation Mono', monospace;transform:scaleX(.835);transform-origin:100% 50%;">380.12</div>
<div class="t" style="left:785.16px;top:210.25px;font-size:21px;line-height:21px;color:#222;font-weight:700;font-family:'Liberation Mono', monospace;transform:scaleX(.835);transform-origin:100% 50%;">377.90</div>
<div class="t" style="left:914.49px;top:210.25px;font-size:21px;line-height:21px;color:#222;font-weight:700;font-family:'Liberation Mono', monospace;transform:scaleX(.835);transform-origin:100% 50%;">380.12</div>
<div class="t" style="left:1043.82px;top:210.25px;font-size:21px;line-height:21px;color:#222;font-weight:700;font-family:'Liberation Mono', monospace;transform:scaleX(.835);transform-origin:100% 50%;">220.31</div>
<div class="t" style="left:1173.15px;top:210.25px;font-size:21px;line-height:21px;color:#222;font-weight:700;font-family:'Liberation Mono', monospace;transform:scaleX(.835);transform-origin:100% 50%;">223.18</div>
<div class="t" style="left:1302.49px;top:210.25px;font-size:21px;line-height:21px;color:#222;font-weight:700;font-family:'Liberation Mono', monospace;transform:scaleX(.835);transform-origin:100% 50%;">220.31</div>
<div class="t" style="left:1431.82px;top:210.25px;font-size:21px;line-height:21px;color:#222;font-weight:700;font-family:'Liberation Mono', monospace;transform:scaleX(.835);transform-origin:100% 50%;">664.04</div>
<div class="t" style="left:1561.15px;top:210.25px;font-size:21px;line-height:21px;color:#222;font-weight:700;font-family:'Liberation Mono', monospace;transform:scaleX(.835);transform-origin:100% 50%;">651.54</div>
<div class="t" style="left:1690.49px;top:210.25px;font-size:21px;line-height:21px;color:#222;font-weight:700;font-family:'Liberation Mono', monospace;transform:scaleX(.835);transform-origin:100% 50%;">664.04</div>
<div class="t" style="left:1819.82px;top:210.25px;font-size:21px;line-height:21px;color:#222;font-weight:700;font-family:'Liberation Mono', monospace;transform:scaleX(.835);transform-origin:100% 50%;">247.23</div>
<div class="t" style="left:1949.15px;top:210.25px;font-size:21px;line-height:21px;color:#222;font-weight:700;font-family:'Liberation Mono', monospace;transform:scaleX(.835);transform-origin:100% 50%;">255.18</div>
<div class="t" style="left:2078.49px;top:210.25px;font-size:21px;line-height:21px;color:#222;font-weight:700;font-family:'Liberation Mono', monospace;transform:scaleX(.835);transform-origin:100% 50%;">247.23</div>
<div class="t" style="left:72.95px;top:237.61px;font-size:18.7px;line-height:18.7px;color:#333333;letter-spacing:-0.933px;">Juices</div>
<div class="t" style="left:267.82px;top:237.85px;font-size:21px;line-height:21px;color:#333333;font-family:'Liberation Mono', monospace;transform:scaleX(.835);transform-origin:100% 50%;">144.92</div>
<div class="t" style="left:397.16px;top:237.85px;font-size:21px;line-height:21px;color:#333333;font-family:'Liberation Mono', monospace;transform:scaleX(.835);transform-origin:100% 50%;">144.11</div>
<div class="t" style="left:526.49px;top:237.85px;font-size:21px;line-height:21px;color:#333333;font-family:'Liberation Mono', monospace;transform:scaleX(.835);transform-origin:100% 50%;">144.92</div>
<div class="t" style="left:655.82px;top:237.85px;font-size:21px;line-height:21px;color:#333333;font-family:'Liberation Mono', monospace;transform:scaleX(.835);transform-origin:100% 50%;">190.22</div>
<div class="t" style="left:785.16px;top:237.85px;font-size:21px;line-height:21px;color:#333333;font-family:'Liberation Mono', monospace;transform:scaleX(.835);transform-origin:100% 50%;">188.31</div>
<div class="t" style="left:914.49px;top:237.85px;font-size:21px;line-height:21px;color:#333333;font-family:'Liberation Mono', monospace;transform:scaleX(.835);transform-origin:100% 50%;">190.22</div>
<div class="t" style="left:1043.82px;top:237.85px;font-size:21px;line-height:21px;color:#333333;font-family:'Liberation Mono', monospace;transform:scaleX(.835);transform-origin:100% 50%;">120.14</div>
<div class="t" style="left:1173.15px;top:237.85px;font-size:21px;line-height:21px;color:#333333;font-family:'Liberation Mono', monospace;transform:scaleX(.835);transform-origin:100% 50%;">121.44</div>
<div class="t" style="left:1302.49px;top:237.85px;font-size:21px;line-height:21px;color:#333333;font-family:'Liberation Mono', monospace;transform:scaleX(.835);transform-origin:100% 50%;">120.14</div>
<div class="t" style="left:1431.82px;top:237.85px;font-size:21px;line-height:21px;color:#333333;font-family:'Liberation Mono', monospace;transform:scaleX(.835);transform-origin:100% 50%;">332.90</div>
<div class="t" style="left:1561.15px;top:237.85px;font-size:21px;line-height:21px;color:#333333;font-family:'Liberation Mono', monospace;transform:scaleX(.835);transform-origin:100% 50%;">331.90</div>
<div class="t" style="left:1690.49px;top:237.85px;font-size:21px;line-height:21px;color:#333333;font-family:'Liberation Mono', monospace;transform:scaleX(.835);transform-origin:100% 50%;">332.90</div>
<div class="t" style="left:1819.82px;top:237.85px;font-size:21px;line-height:21px;color:#333333;font-family:'Liberation Mono', monospace;transform:scaleX(.835);transform-origin:100% 50%;">150.14</div>
<div class="t" style="left:1949.15px;top:237.85px;font-size:21px;line-height:21px;color:#333333;font-family:'Liberation Mono', monospace;transform:scaleX(.835);transform-origin:100% 50%;">158.44</div>
<div class="t" style="left:2078.49px;top:237.85px;font-size:21px;line-height:21px;color:#333333;font-family:'Liberation Mono', monospace;transform:scaleX(.835);transform-origin:100% 50%;">150.14</div>
<div class="t" style="left:72.46px;top:266.61px;font-size:18.7px;line-height:18.7px;color:#333333;letter-spacing:-0.979px;">Soda</div>
<div class="t" style="left:267.82px;top:266.85px;font-size:21px;line-height:21px;color:#333333;font-family:'Liberation Mono', monospace;transform:scaleX(.835);transform-origin:100% 50%;">122.51</div>
<div class="t" style="left:397.16px;top:266.85px;font-size:21px;line-height:21px;color:#333333;font-family:'Liberation Mono', monospace;transform:scaleX(.835);transform-origin:100% 50%;">125.62</div>
<div class="t" style="left:526.49px;top:266.85px;font-size:21px;line-height:21px;color:#333333;font-family:'Liberation Mono', monospace;transform:scaleX(.835);transform-origin:100% 50%;">267.43</div>
<div class="t" style="left:655.82px;top:266.85px;font-size:21px;line-height:21px;color:#333333;font-family:'Liberation Mono', monospace;transform:scaleX(.835);transform-origin:100% 50%;">140.55</div>
<div class="t" style="left:785.16px;top:266.85px;font-size:21px;line-height:21px;color:#333333;font-family:'Liberation Mono', monospace;transform:scaleX(.835);transform-origin:100% 50%;">141.02</div>
<div class="t" style="left:914.49px;top:266.85px;font-size:21px;line-height:21px;color:#333333;font-family:'Liberation Mono', monospace;transform:scaleX(.835);transform-origin:100% 50%;">330.77</div>
<div class="t" style="left:1056.42px;top:266.85px;font-size:21px;line-height:21px;color:#333333;font-family:'Liberation Mono', monospace;transform:scaleX(.835);transform-origin:100% 50%;">70.61</div>
<div class="t" style="left:1185.76px;top:266.85px;font-size:21px;line-height:21px;color:#333333;font-family:'Liberation Mono', monospace;transform:scaleX(.835);transform-origin:100% 50%;">71.29</div>
<div class="t" style="left:1302.49px;top:266.85px;font-size:21px;line-height:21px;color:#333333;font-family:'Liberation Mono', monospace;transform:scaleX(.835);transform-origin:100% 50%;">190.75</div>
<div class="t" style="left:1431.82px;top:266.85px;font-size:21px;line-height:21px;color:#333333;font-family:'Liberation Mono', monospace;transform:scaleX(.835);transform-origin:100% 50%;">247.40</div>
<div class="t" style="left:1561.15px;top:266.85px;font-size:21px;line-height:21px;color:#333333;font-family:'Liberation Mono', monospace;transform:scaleX(.835);transform-origin:100% 50%;">248.16</div>
<div class="t" style="left:1690.49px;top:266.85px;font-size:21px;line-height:21px;color:#333333;font-family:'Liberation Mono', monospace;transform:scaleX(.835);transform-origin:100% 50%;">580.30</div>
<div class="t" style="left:1832.42px;top:266.85px;font-size:21px;line-height:21px;color:#333333;font-family:'Liberation Mono', monospace;transform:scaleX(.835);transform-origin:100% 50%;">68.61</div>
<div class="t" style="left:1961.75px;top:266.85px;font-size:21px;line-height:21px;color:#333333;font-family:'Liberation Mono', monospace;transform:scaleX(.835);transform-origin:100% 50%;">71.29</div>
<div class="t" style="left:2078.49px;top:266.85px;font-size:21px;line-height:21px;color:#333333;font-family:'Liberation Mono', monospace;transform:scaleX(.835);transform-origin:100% 50%;">218.75</div>
<div class="t" style="left:72.83px;top:295.71px;font-size:18.7px;line-height:18.7px;color:#333333;letter-spacing:0.060px;">Tea &amp; Coffee</div>
<div class="t" style="left:280.43px;top:295.75px;font-size:21px;line-height:21px;color:#333333;font-family:'Liberation Mono', monospace;transform:scaleX(.835);transform-origin:100% 50%;">36.32</div>
<div class="t" style="left:409.76px;top:295.75px;font-size:21px;line-height:21px;color:#333333;font-family:'Liberation Mono', monospace;transform:scaleX(.835);transform-origin:100% 50%;">33.59</div>
<div class="t" style="left:526.49px;top:295.75px;font-size:21px;line-height:21px;color:#333333;font-family:'Liberation Mono', monospace;transform:scaleX(.835);transform-origin:100% 50%;">303.76</div>
<div class="t" style="left:668.42px;top:295.75px;font-size:21px;line-height:21px;color:#333333;font-family:'Liberation Mono', monospace;transform:scaleX(.835);transform-origin:100% 50%;">49.35</div>
<div class="t" style="left:797.76px;top:295.75px;font-size:21px;line-height:21px;color:#333333;font-family:'Liberation Mono', monospace;transform:scaleX(.835);transform-origin:100% 50%;">48.57</div>
<div class="t" style="left:914.49px;top:295.75px;font-size:21px;line-height:21px;color:#333333;font-family:'Liberation Mono', monospace;transform:scaleX(.835);transform-origin:100% 50%;">380.12</div>
<div class="t" style="left:1056.42px;top:295.75px;font-size:21px;line-height:21px;color:#333333;font-family:'Liberation Mono', monospace;transform:scaleX(.835);transform-origin:100% 50%;">29.56</div>
<div class="t" style="left:1185.76px;top:295.75px;font-size:21px;line-height:21px;color:#333333;font-family:'Liberation Mono', monospace;transform:scaleX(.835);transform-origin:100% 50%;">30.45</div>
<div class="t" style="left:1302.49px;top:295.75px;font-size:21px;line-height:21px;color:#333333;font-family:'Liberation Mono', monospace;transform:scaleX(.835);transform-origin:100% 50%;">220.31</div>
<div class="t" style="left:1444.42px;top:295.75px;font-size:21px;line-height:21px;color:#333333;font-family:'Liberation Mono', monospace;transform:scaleX(.835);transform-origin:100% 50%;">83.75</div>
<div class="t" style="left:1573.76px;top:295.75px;font-size:21px;line-height:21px;color:#333333;font-family:'Liberation Mono', monospace;transform:scaleX(.835);transform-origin:100% 50%;">71.47</div>
<div class="t" style="left:1690.49px;top:295.75px;font-size:21px;line-height:21px;color:#333333;font-family:'Liberation Mono', monospace;transform:scaleX(.835);transform-origin:100% 50%;">664.04</div>
<div class="t" style="left:1832.42px;top:295.75px;font-size:21px;line-height:21px;color:#333333;font-family:'Liberation Mono', monospace;transform:scaleX(.835);transform-origin:100% 50%;">28.48</div>
<div class="t" style="left:1961.75px;top:295.75px;font-size:21px;line-height:21px;color:#333333;font-family:'Liberation Mono', monospace;transform:scaleX(.835);transform-origin:100% 50%;">25.45</div>
<div class="t" style="left:2078.49px;top:295.75px;font-size:21px;line-height:21px;color:#333333;font-family:'Liberation Mono', monospace;transform:scaleX(.835);transform-origin:100% 50%;">247.23</div>
<div class="r" style="left:40.5px;top:329.3px;width:13.3px;height:13.3px;border:1px solid #777;box-sizing:border-box;"></div>
<div class="r" style="left:44px;top:335.4px;width:6.5px;height:1.2px;background:#666;"></div>
<div class="t" style="left:65.00px;top:328.01px;font-size:18.7px;line-height:18.7px;color:#222;font-weight:700;letter-spacing:-0.589px;">Water</div>
<div class="t" style="left:267.82px;top:327.05px;font-size:21px;line-height:21px;color:#222;font-weight:700;font-family:'Liberation Mono', monospace;transform:scaleX(.835);transform-origin:100% 50%;">109.97</div>
<div class="t" style="left:397.16px;top:327.05px;font-size:21px;line-height:21px;color:#222;font-weight:700;font-family:'Liberation Mono', monospace;transform:scaleX(.835);transform-origin:100% 50%;">105.93</div>
<div class="t" style="left:526.49px;top:327.05px;font-size:21px;line-height:21px;color:#222;font-weight:700;font-family:'Liberation Mono', monospace;transform:scaleX(.835);transform-origin:100% 50%;">413.72</div>
<div class="t" style="left:655.82px;top:327.05px;font-size:21px;line-height:21px;color:#222;font-weight:700;font-family:'Liberation Mono', monospace;transform:scaleX(.835);transform-origin:100% 50%;">132.28</div>
<div class="t" style="left:785.16px;top:327.05px;font-size:21px;line-height:21px;color:#222;font-weight:700;font-family:'Liberation Mono', monospace;transform:scaleX(.835);transform-origin:100% 50%;">130.21</div>
<div class="t" style="left:914.49px;top:327.05px;font-size:21px;line-height:21px;color:#222;font-weight:700;font-family:'Liberation Mono', monospace;transform:scaleX(.835);transform-origin:100% 50%;">512.40</div>
<div class="t" style="left:1056.42px;top:327.05px;font-size:21px;line-height:21px;color:#222;font-weight:700;font-family:'Liberation Mono', monospace;transform:scaleX(.835);transform-origin:100% 50%;">77.79</div>
<div class="t" style="left:1185.76px;top:327.05px;font-size:21px;line-height:21px;color:#222;font-weight:700;font-family:'Liberation Mono', monospace;transform:scaleX(.835);transform-origin:100% 50%;">78.27</div>
<div class="t" style="left:1302.49px;top:327.05px;font-size:21px;line-height:21px;color:#222;font-weight:700;font-family:'Liberation Mono', monospace;transform:scaleX(.835);transform-origin:100% 50%;">298.10</div>
<div class="t" style="left:1431.82px;top:327.05px;font-size:21px;line-height:21px;color:#222;font-weight:700;font-family:'Liberation Mono', monospace;transform:scaleX(.835);transform-origin:100% 50%;">226.31</div>
<div class="t" style="left:1561.15px;top:327.05px;font-size:21px;line-height:21px;color:#222;font-weight:700;font-family:'Liberation Mono', monospace;transform:scaleX(.835);transform-origin:100% 50%;">226.08</div>
<div class="t" style="left:1690.49px;top:327.05px;font-size:21px;line-height:21px;color:#222;font-weight:700;font-family:'Liberation Mono', monospace;transform:scaleX(.835);transform-origin:100% 50%;">890.36</div>
<div class="t" style="left:1832.42px;top:327.05px;font-size:21px;line-height:21px;color:#222;font-weight:700;font-family:'Liberation Mono', monospace;transform:scaleX(.835);transform-origin:100% 50%;">81.39</div>
<div class="t" style="left:1961.75px;top:327.05px;font-size:21px;line-height:21px;color:#222;font-weight:700;font-family:'Liberation Mono', monospace;transform:scaleX(.835);transform-origin:100% 50%;">80.02</div>
<div class="t" style="left:2078.49px;top:327.05px;font-size:21px;line-height:21px;color:#222;font-weight:700;font-family:'Liberation Mono', monospace;transform:scaleX(.835);transform-origin:100% 50%;">328.62</div>
<div class="t" style="left:71.72px;top:357.81px;font-size:18.7px;line-height:18.7px;color:#333333;letter-spacing:0.288px;">Mineral Water</div>
<div class="t" style="left:280.43px;top:355.85px;font-size:21px;line-height:21px;color:#333333;font-family:'Liberation Mono', monospace;transform:scaleX(.835);transform-origin:100% 50%;">95.15</div>
<div class="t" style="left:409.76px;top:355.85px;font-size:21px;line-height:21px;color:#333333;font-family:'Liberation Mono', monospace;transform:scaleX(.835);transform-origin:100% 50%;">91.75</div>
<div class="t" style="left:539.09px;top:355.85px;font-size:21px;line-height:21px;color:#333333;font-family:'Liberation Mono', monospace;transform:scaleX(.835);transform-origin:100% 50%;">95.15</div>
<div class="t" style="left:655.82px;top:355.85px;font-size:21px;line-height:21px;color:#333333;font-family:'Liberation Mono', monospace;transform:scaleX(.835);transform-origin:100% 50%;">110.63</div>
<div class="t" style="left:785.16px;top:355.85px;font-size:21px;line-height:21px;color:#333333;font-family:'Liberation Mono', monospace;transform:scaleX(.835);transform-origin:100% 50%;">109.87</div>
<div class="t" style="left:914.49px;top:355.85px;font-size:21px;line-height:21px;color:#333333;font-family:'Liberation Mono', monospace;transform:scaleX(.835);transform-origin:100% 50%;">110.63</div>
<div class="t" style="left:1056.42px;top:355.85px;font-size:21px;line-height:21px;color:#333333;font-family:'Liberation Mono', monospace;transform:scaleX(.835);transform-origin:100% 50%;">60.34</div>
<div class="t" style="left:1185.76px;top:355.85px;font-size:21px;line-height:21px;color:#333333;font-family:'Liberation Mono', monospace;transform:scaleX(.835);transform-origin:100% 50%;">61.18</div>
<div class="t" style="left:1315.09px;top:355.85px;font-size:21px;line-height:21px;color:#333333;font-family:'Liberation Mono', monospace;transform:scaleX(.835);transform-origin:100% 50%;">60.34</div>
<div class="t" style="left:1431.82px;top:355.85px;font-size:21px;line-height:21px;color:#333333;font-family:'Liberation Mono', monospace;transform:scaleX(.835);transform-origin:100% 50%;">191.67</div>
<div class="t" style="left:1561.15px;top:355.85px;font-size:21px;line-height:21px;color:#333333;font-family:'Liberation Mono', monospace;transform:scaleX(.835);transform-origin:100% 50%;">194.73</div>
<div class="t" style="left:1690.49px;top:355.85px;font-size:21px;line-height:21px;color:#333333;font-family:'Liberation Mono', monospace;transform:scaleX(.835);transform-origin:100% 50%;">191.67</div>
<div class="t" style="left:1832.42px;top:355.85px;font-size:21px;line-height:21px;color:#333333;font-family:'Liberation Mono', monospace;transform:scaleX(.835);transform-origin:100% 50%;">68.34</div>
<div class="t" style="left:1961.75px;top:355.85px;font-size:21px;line-height:21px;color:#333333;font-family:'Liberation Mono', monospace;transform:scaleX(.835);transform-origin:100% 50%;">67.18</div>
<div class="t" style="left:2091.09px;top:355.85px;font-size:21px;line-height:21px;color:#333333;font-family:'Liberation Mono', monospace;transform:scaleX(.835);transform-origin:100% 50%;">68.34</div>
<div class="t" style="left:72.46px;top:385.51px;font-size:18.7px;line-height:18.7px;color:#333333;letter-spacing:0.008px;">Sparkling Water</div>
<div class="t" style="left:280.43px;top:385.45px;font-size:21px;line-height:21px;color:#333333;font-family:'Liberation Mono', monospace;transform:scaleX(.835);transform-origin:100% 50%;">14.82</div>
<div class="t" style="left:409.76px;top:385.45px;font-size:21px;line-height:21px;color:#333333;font-family:'Liberation Mono', monospace;transform:scaleX(.835);transform-origin:100% 50%;">14.18</div>
<div class="t" style="left:526.49px;top:385.45px;font-size:21px;line-height:21px;color:#333333;font-family:'Liberation Mono', monospace;transform:scaleX(.835);transform-origin:100% 50%;">109.97</div>
<div class="t" style="left:668.42px;top:385.45px;font-size:21px;line-height:21px;color:#333333;font-family:'Liberation Mono', monospace;transform:scaleX(.835);transform-origin:100% 50%;">21.65</div>
<div class="t" style="left:797.76px;top:385.45px;font-size:21px;line-height:21px;color:#333333;font-family:'Liberation Mono', monospace;transform:scaleX(.835);transform-origin:100% 50%;">20.34</div>
<div class="t" style="left:914.49px;top:385.45px;font-size:21px;line-height:21px;color:#333333;font-family:'Liberation Mono', monospace;transform:scaleX(.835);transform-origin:100% 50%;">132.28</div>
<div class="t" style="left:1056.42px;top:385.45px;font-size:21px;line-height:21px;color:#333333;font-family:'Liberation Mono', monospace;transform:scaleX(.835);transform-origin:100% 50%;">17.45</div>
<div class="t" style="left:1185.76px;top:385.45px;font-size:21px;line-height:21px;color:#333333;font-family:'Liberation Mono', monospace;transform:scaleX(.835);transform-origin:100% 50%;">17.09</div>
<div class="t" style="left:1315.09px;top:385.45px;font-size:21px;line-height:21px;color:#333333;font-family:'Liberation Mono', monospace;transform:scaleX(.835);transform-origin:100% 50%;">77.79</div>
<div class="t" style="left:1444.42px;top:385.45px;font-size:21px;line-height:21px;color:#333333;font-family:'Liberation Mono', monospace;transform:scaleX(.835);transform-origin:100% 50%;">34.65</div>
<div class="t" style="left:1573.76px;top:385.45px;font-size:21px;line-height:21px;color:#333333;font-family:'Liberation Mono', monospace;transform:scaleX(.835);transform-origin:100% 50%;">31.35</div>
<div class="t" style="left:1690.49px;top:385.45px;font-size:21px;line-height:21px;color:#333333;font-family:'Liberation Mono', monospace;transform:scaleX(.835);transform-origin:100% 50%;">226.31</div>
<div class="t" style="left:1832.42px;top:385.45px;font-size:21px;line-height:21px;color:#333333;font-family:'Liberation Mono', monospace;transform:scaleX(.835);transform-origin:100% 50%;">13.05</div>
<div class="t" style="left:1961.75px;top:385.45px;font-size:21px;line-height:21px;color:#333333;font-family:'Liberation Mono', monospace;transform:scaleX(.835);transform-origin:100% 50%;">12.83</div>
<div class="t" style="left:2091.09px;top:385.45px;font-size:21px;line-height:21px;color:#333333;font-family:'Liberation Mono', monospace;transform:scaleX(.835);transform-origin:100% 50%;">81.39</div>
</div>
<div class="r" style="left:6px;top:1108px;width:2037px;height:1px;background:#dedede;"></div>
<div class="r" style="left:29px;top:1095.5px;width:2013.5px;height:13px;background:#f8f8f8;border-radius:7px;box-shadow:inset 0 0 2px #e4e4e4;"></div>
<div class="r" style="left:29px;top:1095.5px;width:1608.5px;height:13px;border-radius:7px;background:linear-gradient(#c4c4c4,#a9a9a9 45%,#a9a9a9 55%,#c0c0c0);"></div>
<div class="t" style="left:6.62px;top:1121.45px;font-size:19px;line-height:19px;color:#333333;letter-spacing:0.067px;">Total rows: 8</div>
<div class="r" style="left:1595.5px;top:1118.5px;width:89.5px;height:32px;background:#fff;border:1px solid #a0a0a0;box-sizing:border-box;"></div>
<div class="t" style="left:1616.00px;top:1124.55px;font-size:21px;line-height:21px;color:#333333;font-family:'Liberation Mono', monospace;transform:scaleX(.85);transform-origin:0 50%;">100</div>
<div class="t" style="left:1649.67px;top:1125.30px;font-size:18px;line-height:18px;color:#333333;">%</div>
<div class="t" style="left:1755.85px;top:1121.45px;font-size:19px;line-height:19px;color:#333333;letter-spacing:-0.184px;">8 records</div>
<div class="t" style="left:1897.90px;top:1121.45px;font-size:19px;line-height:19px;color:#333333;letter-spacing:-0.158px;">Page 1 of 1</div>
<svg class="r" style="left:1521.5px;top:1118.3px;" width="26.5" height="26.5" viewBox="0 0 26.5 26.5" fill="none"><path d="M10.79 4.26 L11.21 0.97 L15.29 0.97 L15.71 4.26 L17.87 5.15 L20.49 3.12 L23.38 6.01 L21.35 8.63 L22.24 10.79 L25.53 11.21 L25.53 15.29 L22.24 15.71 L21.35 17.87 L23.38 20.49 L20.49 23.38 L17.87 21.35 L15.71 22.24 L15.29 25.53 L11.21 25.53 L10.79 22.24 L8.63 21.35 L6.01 23.38 L3.12 20.49 L5.15 17.87 L4.26 15.71 L0.97 15.29 L0.97 11.21 L4.26 10.79 L5.15 8.63 L3.12 6.01 L6.01 3.12 L8.63 5.15 Z" stroke="#444" stroke-width="1.5" stroke-linejoin="round"/><circle cx="13.25" cy="13.25" r="4.90" stroke="#1b62b8" stroke-width="1.7"/></svg>
<div class="r" style="left:1567px;top:1131.2px;width:16.5px;height:2px;background:#333;"></div>
<div class="r" style="left:1694.3px;top:1131.2px;width:17.5px;height:2px;background:#333;"></div>
<div class="r" style="left:1702px;top:1123.3px;width:2px;height:17.5px;background:#333;"></div>
<svg class="r" style="left:1852px;top:1122px;" width="20" height="19" viewBox="0 0 20 19" fill="none"><path d="M2 1.8 V16.8" stroke="#7c7c7c" stroke-width="2.3"/><path d="M16.8 2 L9.3 9.3 L16.8 16.6" stroke="#7c7c7c" stroke-width="2.3"/></svg>
<svg class="r" style="left:1877px;top:1122px;" width="14" height="19" viewBox="0 0 14 19" fill="none"><path d="M11 2 L3.5 9.3 L11 16.6" stroke="#7c7c7c" stroke-width="2.3"/></svg>
<svg class="r" style="left:2002px;top:1122px;" width="14" height="19" viewBox="0 0 14 19" fill="none"><path d="M2.6 2 L10.1 9.3 L2.6 16.6" stroke="#7c7c7c" stroke-width="2.3"/></svg>
<svg class="r" style="left:2021px;top:1122px;" width="20" height="19" viewBox="0 0 20 19" fill="none"><path d="M17.6 1.8 V16.8" stroke="#7c7c7c" stroke-width="2.3"/><path d="M2.8 2 L10.3 9.3 L2.8 16.6" stroke="#7c7c7c" stroke-width="2.3"/></svg>
<div class="r" style="left:643.2px;top:275px;width:762.8px;height:607px;background:#fff;box-shadow:0 0 11px rgba(0,0,0,.16),0 3px 9px rgba(0,0,0,.07);"></div>
<svg class="r" style="left:668px;top:305px;" width="34" height="34" viewBox="0 0 34 34" fill="none"><path d="M17 1.5 L33.2 33 L0.8 33 Z" fill="#a80000"/><rect x="15.8" y="12" width="2.6" height="12.5" fill="#fff"/><rect x="15.8" y="26.3" width="2.6" height="2.8" fill="#fff"/></svg>
<div class="t" style="left:718.77px;top:306.25px;font-size:33px;line-height:33px;color:#414141;letter-spacing:0.054px;">Writeback Table Mismatch</div>
<svg class="r" style="left:1360px;top:311.5px;" width="21" height="21" viewBox="0 0 21 21" fill="none"><path d="M1.5 1.5 L19.5 19.5 M19.5 1.5 L1.5 19.5" stroke="#333" stroke-width="1.9"/></svg>
<div class="t" style="left:669.12px;top:373.45px;font-size:19px;line-height:19px;color:#444;letter-spacing:-0.066px;">The columns in the destination does not match the columns in the database. Please</div>
<div class="t" style="left:668.55px;top:402.15px;font-size:19px;line-height:19px;color:#444;letter-spacing:0.236px;">alter the writeback destination table.</div>
<div class="t" style="left:668.50px;top:446.10px;font-size:22px;line-height:22px;color:#363636;letter-spacing:0.176px;-webkit-text-stroke:0.25px #363636;">Select Destination</div>
<div class="r" style="left:1024px;top:433px;width:356px;height:46px;background:#fff;border:1px solid #dcdcdc;box-sizing:border-box;"></div>
<div class="t" style="left:1079.95px;top:447.85px;font-size:19px;line-height:19px;color:#333333;letter-spacing:-0.014px;">SQL Server: DD_WB_2609</div>
<svg class="r" style="left:1343px;top:449.5px;" width="21" height="13" viewBox="0 0 21 13" fill="none"><path d="M1.2 1.5 L10.3 10.8 L19.4 1.5" stroke="#333" stroke-width="1.6"/></svg>
<svg class="r" style="left:1040px;top:443px;" width="28" height="28" viewBox="0 0 28 28" fill="none"><path d="M6.1 4.1 C6.6 2.6 8.5 1.2 11.2 1 C12.3 2 12.9 3 13.1 4.2 Z" fill="#f4f4f4" stroke="#c4c4c4" stroke-width=".6"/>
<path d="M4.1 17.6 C3 18.8 2.1 19.8 1.8 20.7 C2.3 22.4 3.6 23.8 5.3 24.6 C7.8 25.9 10.5 26.4 13.1 26.5 C14.9 22.8 16.3 18.6 17 14 C12.5 14.6 8 15.8 4.1 17.6 Z" fill="#fbfbfb" stroke="#a4a4a4" stroke-width=".7"/>
<path d="M3 19.5 C7 21.5 11 22.6 15 23 M5.5 17 C7.5 20 9.5 23 11 26.3 M9.5 15.7 C11 19 12.5 22.5 13.3 25.8 M2.2 21.5 C6 19.5 11 17.5 16.6 16.5 M5 24.2 C8.5 22 12.5 20 16 19" stroke="#b9b9b9" stroke-width=".55"/>
<path d="M6.1 4.1 C11.5 4.4 19.5 6.3 26.4 10.5 C19 11.2 11 13.8 4.1 17.6 C8.3 13.5 10.3 9 6.1 4.1 Z" fill="rgba(222,44,56,.10)" stroke="#dc3a45" stroke-width=".75" stroke-linejoin="round"/>
<path d="M8.3 6.6 C12.5 8.6 16.5 9.6 20.5 10 M9.3 11.2 C12.5 9.2 16 8 19 7.6 M7 15.3 C10.5 12.4 15 11.4 19.5 11.2 M10.8 4.9 C12.6 8 12.4 11.5 10 14.3 M14.8 5.6 C16 8 15.8 10.8 14.2 12.7 M8.4 7.2 C10 10 9.2 13 6.8 16" stroke="#da3541" stroke-width=".5"/></svg>
<div class="r" style="left:669px;top:496px;width:711px;height:308.8px;background:#f8f9fa;border:1px solid #dedede;border-radius:8px;box-sizing:border-box;"></div>
<div class="t" style="left:717.40px;top:550.15px;font-size:19px;line-height:19px;color:#c792ea;transform:scaleX(0.8868);transform-origin:0 50%;">CREATE TABLE</div>
<div class="t" style="left:846.85px;top:550.15px;font-size:19px;line-height:19px;color:#333333;letter-spacing:0.912px;">[dbo]</div>
<div class="t" style="left:894.67px;top:550.15px;font-size:19px;line-height:19px;color:#333333;">.</div>
<div class="t" style="left:903.75px;top:550.15px;font-size:19px;line-height:19px;color:#333333;letter-spacing:0.709px;">[DD_WB_2609]</div>
<div class="t" style="left:1046.17px;top:550.15px;font-size:19px;line-height:19px;color:#333333;">(</div>
<div class="t" style="left:725.85px;top:582.45px;font-size:19px;line-height:19px;color:#333333;letter-spacing:0.182px;">[Category] nvarchar(<span style="color:#3c9d6c">255</span>),</div>
<div class="t" style="left:725.85px;top:614.75px;font-size:19px;line-height:19px;color:#333333;letter-spacing:0.038px;">[Sub Category] nvarchar(<span style="color:#3c9d6c">255</span>),</div>
<div class="t" style="left:725.85px;top:647.05px;font-size:19px;line-height:19px;color:#333333;letter-spacing:-0.083px;">[Sub Region] nvarchar(<span style="color:#3c9d6c">255</span>),</div>
<div class="t" style="left:725.85px;top:679.35px;font-size:19px;line-height:19px;color:#333333;letter-spacing:0.069px;">[ValueColumnName] nvarchar(<span style="color:#3c9d6c">255</span>),</div>
<div class="t" style="left:725.85px;top:711.65px;font-size:19px;line-height:19px;color:#333333;letter-spacing:-0.185px;">[Value] <span style="color:#e0cb7c">NUMERIC</span>(<span style="color:#3c9d6c">25</span> , <span style="color:#3c9d6c">2</span>),</div>
<div class="t" style="left:725.85px;top:743.95px;font-size:19px;line-height:19px;color:#333333;letter-spacing:0.094px;">[ValueText] nvarchar(max),</div>
<div class="r" style="left:1335.4px;top:527px;width:10.8px;height:245px;background:#fefefe;border-radius:6px;box-shadow:0 0 0 .5px #f1f1f1;"></div>
<div class="r" style="left:1335.4px;top:528.3px;width:10.8px;height:65.5px;background:#adadad;border-radius:5.5px;box-shadow:0 0 1px #adadad;"></div>
<div class="r" style="left:1346.3px;top:507.5px;width:25.2px;height:34.2px;background:#f8f9fa;border:1px solid #ebebeb;box-sizing:border-box;border-radius:1px;"></div>
<svg class="r" style="left:1350px;top:513px;" width="19" height="22" viewBox="0 0 19 22" fill="none"><path d="M5.6 16.2 H1 V1.6 H8.2 C10.2 1.6 11.6 2.8 12.2 4.6" stroke="#3a3a3a" stroke-width="1.25"/>
<path d="M6 5.1 H12.4 L16.8 9.4 V20.3 H6 Z" stroke="#3a3a3a" stroke-width="1.25" fill="#f8f9fa" stroke-linejoin="round"/>
<path d="M12.4 5.1 V9.4 H16.8" stroke="#3a3a3a" stroke-width="1.1"/></svg>
<div class="r" style="left:1251px;top:821px;width:129px;height:42px;background:#0078d4;"></div>
<div class="t" style="left:1300.00px;top:831.80px;font-size:20px;line-height:20px;color:#fff;font-weight:700;letter-spacing:-0.500px;">OK</div>
<div class="r" style="left:0;top:0;width:2px;height:7px;background:#777"></div>
<div class="r" style="left:0;top:570px;width:1px;height:15px;background:#777"></div>
<div class="r" style="left:2047px;top:570px;width:1px;height:15px;background:#777"></div>
<div class="r" style="left:1016.5px;top:1155.5px;width:15.5px;height:2.5px;background:#999"></div>
<div class="r" style="left:0;top:1150px;width:2px;height:8px;background:#777"></div><div class="r" style="left:0;top:1156px;width:9px;height:2px;background:#777"></div>
<div class="r" style="left:2046px;top:1150px;width:2px;height:8px;background:#777"></div><div class="r" style="left:2039px;top:1156px;width:9px;height:2px;background:#777"></div>
</body></html>
